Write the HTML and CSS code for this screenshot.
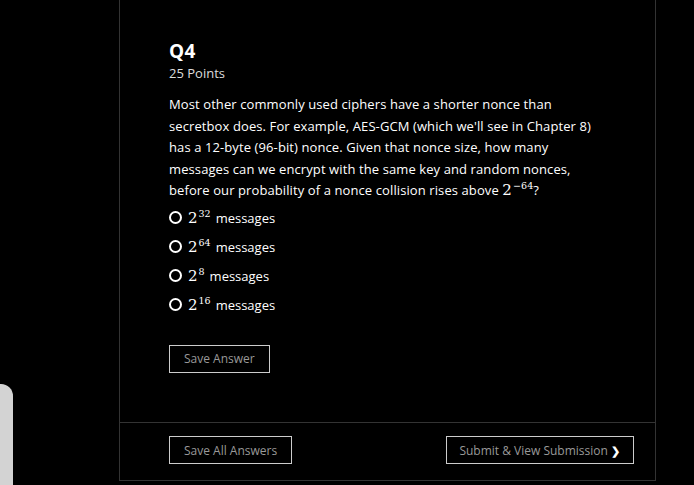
FILE: index.html
```html
<!DOCTYPE html>
<html lang="en">
<head>
    <meta charset="UTF-8">
    <title>Quiz</title>
    <link rel="stylesheet" href="styles.css">
</head>
<body>
    <div class="side-tab"></div>
    <div class="quiz">
        <div class="question">
            <h2>Q4</h2>
            <div class="points">25 Points</div>
            <p class="prompt">
                Most other commonly used ciphers have a shorter nonce than<br>
                secretbox does. For example, AES-GCM (which we'll see in Chapter 8)<br>
                has a 12-byte (96-bit) nonce. Given that nonce size, how many<br>
                messages can we encrypt with the same key and random nonces,<br>
                before our probability of a nonce collision rises above <span class="math">2<sup>&minus;64</sup></span>?
            </p>
            <div class="options">
                <label class="option"><span class="radio"></span><span class="math">2<sup>32</sup></span> messages</label>
                <label class="option"><span class="radio"></span><span class="math">2<sup>64</sup></span> messages</label>
                <label class="option"><span class="radio"></span><span class="math">2<sup>8</sup></span> messages</label>
                <label class="option"><span class="radio"></span><span class="math">2<sup>16</sup></span> messages</label>
            </div>
            <button class="btn">Save Answer</button>
        </div>
        <div class="footer">
            <button class="btn">Save All Answers</button>
            <button class="btn">Submit &amp; View Submission <span class="chev">&#10095;</span></button>
        </div>
    </div>
</body>
</html>
```

FILE: styles.css
```css
body {
    margin: 0;
    background-color: #000;
    color: #fff;
    font-family: "Open Sans", "Liberation Sans", sans-serif;
    height: 485px;
    overflow: hidden;
}

/* onglet gris a gauche */
.side-tab {
    position: absolute;
    left: 0;
    top: 384px;
    width: 13px;
    height: 120px;
    background-color: #d3d3d3;
    border-radius: 0 12px 0 0;
}

.quiz {
    margin-left: 119px;
    width: 535px;
    border-left: 1px solid #333;
    border-right: 1px solid #333;
    border-bottom: 1px solid #333;
}

.question {
    height: 423px;
    box-sizing: border-box;
    padding: 40px 49px 0;
    border-bottom: 1px solid #333;
}

h2 {
    margin: 0;
    font-size: 19px;
    letter-spacing: 0.5px;
    line-height: 22px;
    font-weight: 700;
}

.points {
    margin-top: 2px;
    font-size: 13px;
    line-height: 18px;
    color: #ddd;
}

.prompt {
    margin: 12px 0 0;
    font-size: 13px;
    letter-spacing: 0.1px;
    line-height: 21.5px;
}

.math {
    font-family: "DejaVu Serif", "Liberation Serif", serif;
    font-size: 15px;
}

.math sup {
    display: inline-block;
    font-size: 9.5px;
    line-height: 10px;
    vertical-align: 6px;
    margin-left: 1px;
}

.options {
    display: flex;
    flex-direction: column;
    gap: 9px;
    margin-top: 6px;
}

.option {
    display: flex;
    align-items: center;
    gap: 5px;
    font-size: 13px;
    line-height: 20px;
}

.radio {
    width: 9px;
    height: 9px;
    border: 2px solid #fff;
    border-radius: 50%;
    margin-right: 1px;
}

.btn {
    background: #000;
    border: 1px solid #ccc;
    color: #999;
    font-family: inherit;
    font-size: 12px;
    height: 28px;
    padding: 0 14px;
}

.question .btn {
    margin-top: 30px;
}

.footer {
    height: 57px;
    box-sizing: border-box;
    padding: 13px 21px 0 49px;
    display: flex;
    justify-content: space-between;
}

.footer .btn:last-child {
    padding: 0 13px 0 12px;
}

.chev {
    color: #fff;
    font-size: 11px;
    font-weight: bold;
}
```
